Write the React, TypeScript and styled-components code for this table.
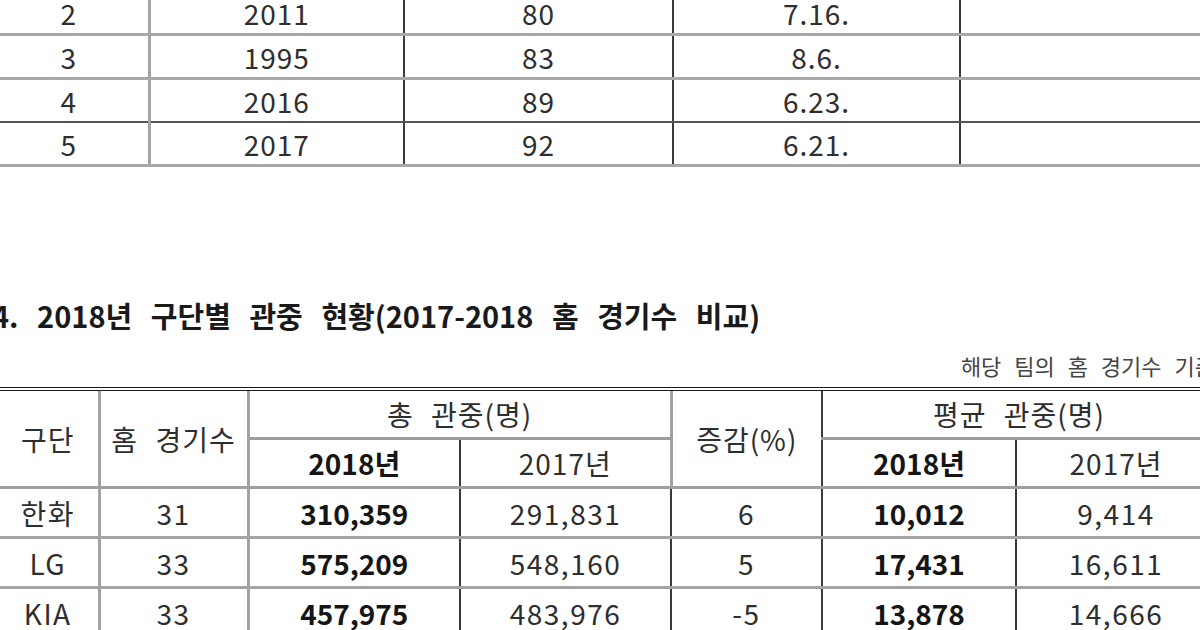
import React from "react";
import styled, { createGlobalStyle } from "styled-components";

const GlobalStyle = createGlobalStyle`
  html, body {
    margin: 0;
    padding: 0;
    background: #ffffff;
    overflow: hidden;
  }
  body {
    font-family: "Noto Sans CJK KR", "Noto Sans", "Liberation Sans", sans-serif;
    color: #222;
  }
`;

const Page = styled.div`
  width: 1200px;
  height: 630px;
  overflow: hidden;
  display: flex;
  flex-direction: column;
`;

const Table = styled.table<{ $left: number; $width: number }>`
  border-collapse: collapse;
  table-layout: fixed;
  width: ${(p) => p.$width}px;
  margin-left: ${(p) => p.$left}px;
  flex-shrink: 0;
`;

const TopTable = styled(Table)`
  margin-top: -8px;
  border-bottom: 3px solid #151515;
`;

const TopCell = styled.td<{ $line?: "gray" | "dark"; $rowLine?: "gray" | "dark" }>`
  height: 41px;
  padding: 0;
  text-align: center;
  vertical-align: middle;
  font-size: 28px;
  letter-spacing: 1px;
  line-height: 1;
  color: #2e2e2e;
  border-right: ${(p) => (p.$line === "gray" ? "3px solid #a3a3a3" : "2px solid #3a3a3a")};
  border-bottom: ${(p) => (p.$rowLine === "dark" ? "2px solid #555" : "3px solid #a8a8a8")};
`;

const Title = styled.h2`
  margin: 130px 0 0 -8px;
  font-size: 29px;
  line-height: 36px;
  height: 36px;
  font-weight: 700;
  color: #1a1a1a;
  word-spacing: 12px;
  white-space: nowrap;
`;

const Note = styled.div`
  margin: 18px 0 0 0;
  width: 1215px;
  text-align: right;
  font-size: 22px;
  line-height: 28px;
  color: #444;
  word-spacing: 8px;
  white-space: nowrap;
`;

const BottomTable = styled(Table)`
  margin-top: 8px;
  border-top: 4px double #1a1a1a;
`;

const HeadCell = styled.th<{ $line?: "gray" | "dark"; $bold?: boolean; $under?: boolean }>`
  height: 46px;
  padding: 0;
  text-align: center;
  vertical-align: middle;
  font-size: 28px;
  line-height: 1;
  font-weight: ${(p) => (p.$bold ? 700 : 400)};
  letter-spacing: ${(p) => (p.$bold ? "0" : "1px")};
  color: ${(p) => (p.$bold ? "#151515" : "#2e2e2e")};
  word-spacing: 10px;
  border-right: ${(p) => (p.$line === "gray" ? "3px solid #a3a3a3" : "2px solid #3a3a3a")};
  border-bottom: ${(p) => (p.$under ? "3px solid #9c9c9c" : "3px solid #a0a0a0")};
`;

const BodyCell = styled.td<{ $line?: "gray" | "dark"; $bold?: boolean }>`
  height: 47px;
  padding: 0;
  text-align: center;
  vertical-align: middle;
  font-size: 28px;
  line-height: 1;
  font-weight: ${(p) => (p.$bold ? 700 : 400)};
  letter-spacing: ${(p) => (p.$bold ? "0" : "1.5px")};
  color: ${(p) => (p.$bold ? "#151515" : "#2e2e2e")};
  border-right: ${(p) => (p.$line === "gray" ? "3px solid #a3a3a3" : "2px solid #3a3a3a")};
  border-bottom: 3px solid #a4a4a4;
`;

const topRows = [
  ["2", "2011", "80", "7.16.", ""],
  ["3", "1995", "83", "8.6.", ""],
  ["4", "2016", "89", "6.23.", ""],
  ["5", "2017", "92", "6.21.", ""],
];

const bottomRows = [
  ["한화", "31", "310,359", "291,831", "6", "10,012", "9,414"],
  ["LG", "33", "575,209", "548,160", "5", "17,431", "16,611"],
  ["KIA", "33", "457,975", "483,976", "-5", "13,878", "14,666"],
];

const topWidths = [159, 255, 269, 287, 260];
const bottomWidths = [101, 149, 212, 211, 151, 194, 200];
const bottomLines: ("gray" | "dark")[] = ["gray", "gray", "dark", "dark", "dark", "dark", "dark"];

export default function App() {
  return (
    <>
      <GlobalStyle />
      <Page>
        <TopTable $left={-10} $width={topWidths.reduce((a, b) => a + b, 0)}>
          <colgroup>
            {topWidths.map((w, i) => (
              <col key={i} style={{ width: w }} />
            ))}
          </colgroup>
          <tbody>
            {topRows.map((r, ri) => (
              <tr key={ri}>
                {r.map((c, ci) => (
                  <TopCell
                    key={ci}
                    $line={ci === 0 ? "gray" : "dark"}
                    $rowLine={ri === 2 ? "dark" : "gray"}
                  >
                    {c}
                  </TopCell>
                ))}
              </tr>
            ))}
          </tbody>
        </TopTable>

        <Title>4. 2018년 구단별 관중 현황(2017-2018 홈 경기수 비교)</Title>
        <Note>해당 팀의 홈 경기수 기준</Note>

        <BottomTable $left={-2} $width={bottomWidths.reduce((a, b) => a + b, 0)}>
          <colgroup>
            {bottomWidths.map((w, i) => (
              <col key={i} style={{ width: w }} />
            ))}
          </colgroup>
          <thead>
            <tr>
              <HeadCell rowSpan={2} $line="gray">구단</HeadCell>
              <HeadCell rowSpan={2} $line="gray">홈 경기수</HeadCell>
              <HeadCell colSpan={2} $line="gray" $under>총 관중(명)</HeadCell>
              <HeadCell rowSpan={2} $line="dark">증감(%)</HeadCell>
              <HeadCell colSpan={2} $line="dark" $under>평균 관중(명)</HeadCell>
            </tr>
            <tr>
              <HeadCell $bold $line="dark">2018년</HeadCell>
              <HeadCell $line="gray">2017년</HeadCell>
              <HeadCell $bold $line="dark">2018년</HeadCell>
              <HeadCell $line="dark">2017년</HeadCell>
            </tr>
          </thead>
          <tbody>
            {bottomRows.map((r, ri) => (
              <tr key={ri}>
                {r.map((c, ci) => (
                  <BodyCell key={ci} $line={bottomLines[ci]} $bold={ci === 2 || ci === 5}>
                    {c}
                  </BodyCell>
                ))}
              </tr>
            ))}
          </tbody>
        </BottomTable>
      </Page>
    </>
  );
}
